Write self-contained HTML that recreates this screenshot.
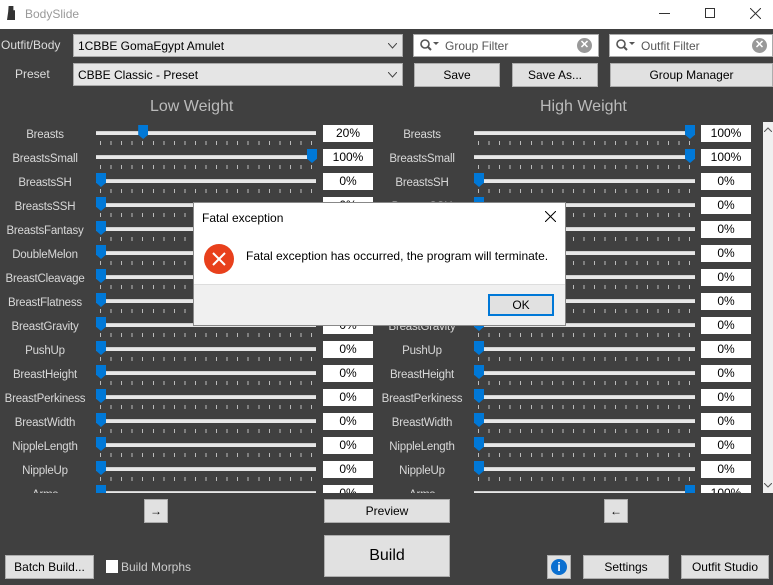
<!DOCTYPE html><html><head><style>
*{margin:0;padding:0;box-sizing:border-box}
body{width:773px;height:585px;background:#404040;font-family:"Liberation Sans",sans-serif;font-size:12px;position:relative;overflow:hidden;color:#000}
.a{position:absolute}
.tb{left:0;top:0;width:773px;height:29px;background:#fff}
.btn{position:absolute;background:#e1e1e1;border:1px solid #adadad;text-align:center;font-size:12px;color:#000}
.lab{position:absolute;color:#d8d8d8;font-size:11.5px;text-align:center;width:94px;letter-spacing:-0.2px}
.trk{position:absolute;height:4px;background:#e7e7e7;border-top:1px solid #d0d0d0}
.tk{position:absolute;height:4px;background:repeating-linear-gradient(90deg,#bbb 0 1px,transparent 1px 10.55px)}
.th{position:absolute;width:10px;height:14px;background:#0078d7;clip-path:polygon(0 0,100% 0,100% 70%,50% 100%,0 70%)}
.val{position:absolute;width:50px;height:17px;background:#fff;text-align:center;font-size:12px;line-height:17px}
</style></head><body>
<div class="a tb"></div>
<div class="a" style="left:7px;top:6px;width:8px;height:14px;background:#333;clip-path:polygon(20% 0,80% 0,80% 30%,100% 30%,100% 100%,0 100%,15% 40%)"></div>
<div class="a" style="left:25px;top:7px;color:#999;font-size:12px">BodySlide</div>
<div class="a" style="left:659px;top:13px;width:11px;height:1px;background:#333"></div>
<div class="a" style="left:705px;top:8px;width:10px;height:10px;border:1px solid #333"></div>
<svg class="a" style="left:750px;top:8px" width="11" height="11"><path d="M0 0L11 11M11 0L0 11" stroke="#333" stroke-width="1"/></svg>

<div class="a" style="left:1px;top:38px;color:#ddd">Outfit/Body</div>
<div class="a" style="left:15px;top:67px;color:#ddd">Preset</div>
<div class="a" style="left:73px;top:34px;width:330px;height:23px;background:#e5e5e5;border:1px solid #aaa;padding:4px 4px;font-size:12px">1CBBE GomaEgypt Amulet<svg style="position:absolute;right:5px;top:8px" width="9" height="6"><path d="M0 0L4.5 5L9 0" fill="none" stroke="#444"/></svg></div>
<div class="a" style="left:73px;top:63px;width:330px;height:23px;background:#e5e5e5;border:1px solid #aaa;padding:4px 4px;font-size:12px">CBBE Classic - Preset<svg style="position:absolute;right:5px;top:8px" width="9" height="6"><path d="M0 0L4.5 5L9 0" fill="none" stroke="#444"/></svg></div>
<div class="a" style="left:413px;top:34px;width:186px;height:23px;background:#fff;border:1px solid #aaa;padding:4px 0 0 31px;color:#555">Group Filter</div>
<div class="a" style="left:609px;top:34px;width:164px;height:23px;background:#fff;border:1px solid #aaa;padding:4px 0 0 31px;color:#555">Outfit Filter</div>
<svg class="a" style="left:420px;top:39px" width="20" height="12"><circle cx="5" cy="5" r="4" fill="none" stroke="#555" stroke-width="1.6"/><path d="M8 8L11 11" stroke="#555" stroke-width="2"/><path d="M13 3H19L16 6Z" fill="#555"/></svg>
<svg class="a" style="left:616px;top:39px" width="20" height="12"><circle cx="5" cy="5" r="4" fill="none" stroke="#555" stroke-width="1.6"/><path d="M8 8L11 11" stroke="#555" stroke-width="2"/><path d="M13 3H19L16 6Z" fill="#555"/></svg>
<div class="a" style="left:577px;top:38px;width:15px;height:15px;border-radius:50%;background:#999;color:#fff;font-size:11px;text-align:center;line-height:15px;font-weight:bold">✕</div>
<div class="a" style="left:752px;top:38px;width:15px;height:15px;border-radius:50%;background:#999;color:#fff;font-size:11px;text-align:center;line-height:15px;font-weight:bold">✕</div>
<div class="btn" style="left:414px;top:63px;width:86px;height:24px;line-height:22px">Save</div>
<div class="btn" style="left:512px;top:63px;width:86px;height:24px;line-height:22px">Save As...</div>
<div class="btn" style="left:610px;top:63px;width:163px;height:24px;line-height:22px">Group Manager</div>

<div class="a" style="left:150px;top:98px;color:#bbb;font-size:16px">Low Weight</div>
<div class="a" style="left:540px;top:98px;color:#bbb;font-size:16px">High Weight</div>

<div class="a" style="left:0;top:122px;width:763px;height:371px;overflow:hidden" id="rows"></div>
<div class="a" style="left:763px;top:122px;width:10px;height:371px;background:#f0f0f0"></div>
<svg class="a" style="left:764px;top:127px" width="8" height="5"><path d="M0 5L4 1L8 5" fill="none" stroke="#555"/></svg>
<svg class="a" style="left:764px;top:483px" width="8" height="5"><path d="M0 0L4 4L8 0" fill="none" stroke="#555"/></svg>

<div class="btn" style="left:144px;top:499px;width:24px;height:24px;line-height:22px">→</div>
<div class="btn" style="left:324px;top:499px;width:126px;height:24px;line-height:22px">Preview</div>
<div class="btn" style="left:604px;top:499px;width:24px;height:24px;line-height:22px">←</div>
<div class="btn" style="left:324px;top:535px;width:126px;height:42px;line-height:40px;font-size:16px">Build</div>
<div class="btn" style="left:5px;top:555px;width:89px;height:24px;line-height:22px">Batch Build...</div>
<div class="a" style="left:106px;top:560px;width:12px;height:13px;background:#fff"></div>
<div class="a" style="left:121px;top:560px;color:#ccc">Build Morphs</div>
<div class="btn" style="left:547px;top:555px;width:24px;height:24px"><div style="margin:3px auto;width:16px;height:16px;border-radius:50%;background:#0b6fd0;color:#fff;font-weight:bold;font-size:12px;line-height:16px">i</div></div>
<div class="btn" style="left:583px;top:555px;width:86px;height:24px;line-height:22px">Settings</div>
<div class="btn" style="left:681px;top:555px;width:88px;height:24px;line-height:22px">Outfit Studio</div>

<div class="a" style="left:193px;top:202px;width:373px;height:124px;background:#f0f0f0;border:1px solid #888">
<div class="a" style="left:0;top:0;width:371px;height:82px;background:#fff;border-bottom:1px solid #ddd"></div>
<div class="a" style="left:8px;top:8px;font-size:12px">Fatal exception</div>
<svg class="a" style="left:351px;top:8px" width="11" height="11"><path d="M0 0L11 11M11 0L0 11" stroke="#000" stroke-width="1"/></svg>
<div class="a" style="left:10px;top:41px;width:30px;height:30px;border-radius:50%;background:#e8401c"><svg width="30" height="30"><path d="M9 9L21 21M21 9L9 21" stroke="#fff" stroke-width="2"/></svg></div>
<div class="a" style="left:52px;top:46px;font-size:12px">Fatal exception has occurred, the program will terminate.</div>
<div class="a" style="left:294px;top:91px;width:66px;height:22px;border:2px solid #0078d7;background:#e1e1e1;text-align:center;line-height:18px">OK</div>
</div>

<script>
var L=["Breasts","BreastsSmall","BreastsSH","BreastsSSH","BreastsFantasy","DoubleMelon","BreastCleavage","BreastFlatness","BreastGravity","PushUp","BreastHeight","BreastPerkiness","BreastWidth","NippleLength","NippleUp","Arms"];
var lv=[20,100],hv=[100,100];var h="";
for(var i=0;i<L.length;i++){var y=i*24;
var l=i<2?lv[i]:0,r=(i<2||i==15)?100:0;
h+='<div class="lab" style="left:-2px;top:'+(y+5)+'px">'+L[i]+'</div>';
h+='<div class="lab" style="left:375px;top:'+(y+5)+'px">'+L[i]+'</div>';
h+='<div class="trk" style="left:96px;top:'+(y+9)+'px;width:220px"></div>';
h+='<div class="tk" style="left:100px;top:'+(y+19)+'px;width:212px"></div>';
h+='<div class="th" style="left:'+(96+l*2.11)+'px;top:'+(y+3)+'px"></div>';
h+='<div class="val" style="left:323px;top:'+(y+3)+'px">'+l+'%</div>';
h+='<div class="trk" style="left:474px;top:'+(y+9)+'px;width:221px"></div>';
h+='<div class="tk" style="left:478px;top:'+(y+19)+'px;width:212px"></div>';
h+='<div class="th" style="left:'+(474+r*2.11)+'px;top:'+(y+3)+'px"></div>';
h+='<div class="val" style="left:701px;top:'+(y+3)+'px">'+r+'%</div>';}
document.getElementById("rows").innerHTML=h.replace(/class="lab" style="left:(-?\d+)px;top:(\d+)px/g,function(m,a,b){return 'class="lab" style="left:'+a+'px;top:'+(+b+2)+'px';});
</script>
</body></html>
